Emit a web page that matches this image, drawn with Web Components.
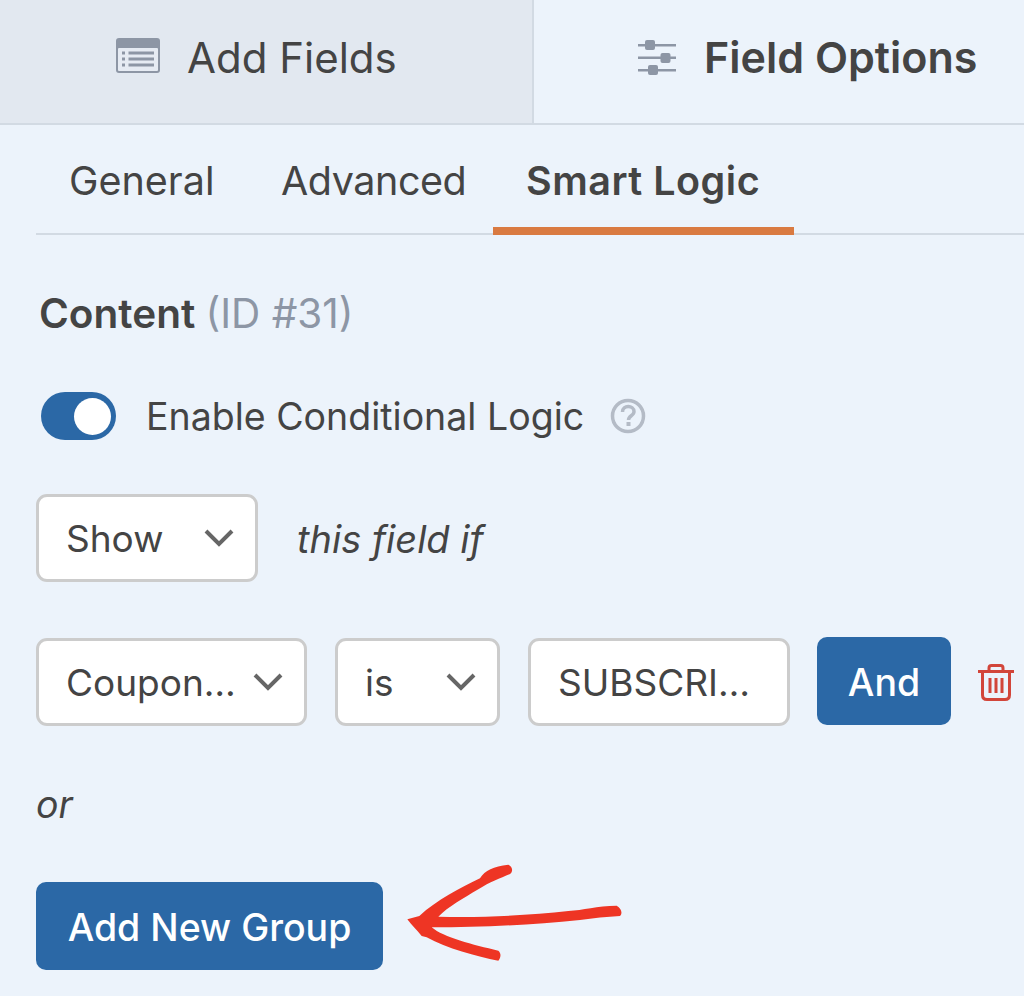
<!DOCTYPE html>
<html>
<head>
<meta charset="utf-8">
<title>Smart Logic</title>
<style>
  html, body { margin: 0; background: #ecf3fb; }
  body { font-family: Inter, "Liberation Sans", sans-serif; color: #444; width: 1024px; height: 996px; overflow: hidden; }
</style>
</head>
<body>
<top-tabs></top-tabs>
<sub-tabs></sub-tabs>
<logic-panel></logic-panel>

<script>
class TopTabs extends HTMLElement {
  constructor() {
    super();
    this.attachShadow({ mode: "open" });
    this.shadowRoot.innerHTML = /*html*/`
      <style>
        :host { display: flex; height: 125px; box-sizing: border-box; border-bottom: 2px solid #d2dae3; }
        .tab { display: flex; align-items: center; font-size: 42px; padding-bottom: 9px; box-sizing: border-box; }
        .add { width: 534px; background: #e2e8f0; border-right: 2px solid #d2dae3; padding-left: 116px; gap: 27px; }
        .opt { flex: 1; padding-left: 104px; gap: 28px; font-weight: 600; font-size: 43px; }
        .add svg { margin-bottom: 4px; }
        .opt svg { margin-top: 1px; }
        svg { display: block; flex: none; }
      </style>
      <div class="tab add">
        <svg width="44" height="35" viewBox="0 0 44 35">
          <rect x="0" y="0" width="44" height="35" rx="3" fill="#8d96a5"/>
          <rect x="2" y="10" width="40" height="23" rx="1" fill="#e6ebf3"/>
          <rect x="6" y="13.5" width="3" height="3" fill="#8d96a5"/>
          <rect x="6" y="19.5" width="3" height="3" fill="#8d96a5"/>
          <rect x="6" y="25.5" width="3" height="3" fill="#8d96a5"/>
          <rect x="12.5" y="13.5" width="25.5" height="3" fill="#8d96a5"/>
          <rect x="12.5" y="19.5" width="25.5" height="3" fill="#8d96a5"/>
          <rect x="12.5" y="25.5" width="25.5" height="3" fill="#8d96a5"/>
        </svg>
        <span>Add Fields</span>
      </div>
      <div class="tab opt">
        <svg width="38" height="36" viewBox="0 0 38 36" fill="#8d96a5">
          <rect x="0" y="4" width="38" height="2.5"/>
          <rect x="0" y="16.5" width="38" height="2.5"/>
          <rect x="0" y="29" width="38" height="2.5"/>
          <rect x="7" y="0" width="10" height="10" rx="2"/>
          <rect x="22.5" y="13" width="10" height="10" rx="2"/>
          <rect x="10" y="25" width="10" height="10" rx="2"/>
        </svg>
        <span>Field Options</span>
      </div>
    `;
  }
}
customElements.define("top-tabs", TopTabs);

class SubTabs extends HTMLElement {
  constructor() {
    super();
    this.attachShadow({ mode: "open" });
    this.shadowRoot.innerHTML = /*html*/`
      <style>
        :host { display: flex; margin-left: 36px; height: 110px; box-sizing: border-box; border-bottom: 2px solid #d2dae3; font-size: 39.5px; }
        div { padding: 33px 0 0 33px; box-sizing: border-box; height: 110px; line-height: 46px; white-space: nowrap; }
        .gen { width: 212px; }
        .adv { width: 245px; letter-spacing: -0.45px; }
        .on { width: 301px; font-weight: 600; letter-spacing: 0.5px; border-bottom: 8px solid #d97a41; }
      </style>
      <div class="gen">General</div>
      <div class="adv">Advanced</div>
      <div class="on">Smart Logic</div>
    `;
  }
}
customElements.define("sub-tabs", SubTabs);

class SelectBox extends HTMLElement {
  constructor() {
    super();
    this.attachShadow({ mode: "open" });
    this.shadowRoot.innerHTML = /*html*/`
      <style>
        :host { display: flex; align-items: center; justify-content: space-between; box-sizing: border-box; height: 88px; background: #fff; border: 3px solid #ccc; border-radius: 11px; padding: 0 21px 0 27px; font-size: 37px; white-space: nowrap; }
        svg { display: block; flex: none; }
      </style>
      <slot></slot>
      <svg width="30" height="18" viewBox="0 0 30 18" fill="none" stroke="#666" stroke-width="4"><path d="M2 2 L15 15 L28 2"/></svg>
    `;
  }
}
customElements.define("select-box", SelectBox);

class BlueButton extends HTMLElement {
  constructor() {
    super();
    this.attachShadow({ mode: "open" });
    this.shadowRoot.innerHTML = /*html*/`
      <style>
        :host { display: flex; align-items: center; justify-content: center; box-sizing: border-box; height: 88px; padding-top: 2px; background: #2b68a6; color: #fff; border-radius: 10px; font-size: 37.5px; font-weight: 500; white-space: nowrap; }
      </style>
      <slot></slot>
    `;
  }
}
customElements.define("blue-button", BlueButton);

class ToggleRow extends HTMLElement {
  constructor() {
    super();
    this.attachShadow({ mode: "open" });
    this.shadowRoot.innerHTML = /*html*/`
      <style>
        :host { display: flex; align-items: center; margin-left: 5px; font-size: 37.5px; height: 48px; }
        .sw { width: 75px; height: 48px; border-radius: 24px; background: #2b68a6; display: flex; justify-content: flex-end; align-items: center; padding-right: 5px; box-sizing: border-box; }
        .knob { width: 37px; height: 37px; border-radius: 50%; background: #fff; }
        .label { margin-left: 30px; white-space: nowrap; }
        svg { display: block; margin-left: 26px; }
      </style>
      <div class="sw"><div class="knob"></div></div>
      <span class="label"><slot></slot></span>
      <svg width="36" height="36" viewBox="0 0 36 36" fill="none">
        <circle cx="18" cy="18" r="15.5" stroke="#b4bbc6" stroke-width="3.5"/>
        <path d="M12.5 14 C12.5 6.5 24 7 24 13.5 C24 18 18.5 17.5 18.5 22" stroke="#b4bbc6" stroke-width="3.5"/>
        <rect x="16.5" y="24" width="4" height="4" fill="#b4bbc6"/>
      </svg>
    `;
  }
}
customElements.define("toggle-row", ToggleRow);

class LogicPanel extends HTMLElement {
  constructor() {
    super();
    this.attachShadow({ mode: "open" });
    this.shadowRoot.innerHTML = /*html*/`
      <style>
        :host { display: block; position: relative; padding: 54px 0 0 36px; font-size: 37.5px; }
        .title { margin: 0 0 0 3px; height: 50px; line-height: 50px; font-weight: 600; font-size: 40.5px; }
        .title span { font-weight: 400; color: #8d96a5; }
        toggle-row { margin-top: 53px; }
        .row { display: flex; align-items: center; }
        .show { margin-top: 54px; }
        .show select-box { width: 222px; }
        .show i { margin-left: 39px; font-size: 38px; padding-top: 2px; }
        .cond { margin-top: 56px; }
        .coupon { width: 271px; }
        .is { width: 165px; margin-left: 28px; }
        .val { width: 262px; margin-left: 28px; box-sizing: border-box; height: 88px; display: flex; align-items: center; background: #fff; border: 3px solid #ccc; border-radius: 11px; padding-left: 27px; white-space: nowrap; font-size: 37px; }
        .and { width: 134px; margin: -2px 0 0 27px; }
        .trash { display: block; margin-left: 27px; }
        .or { display: block; margin-top: 56px; height: 46px; line-height: 46px; }
        .group { width: 347px; margin-top: 54px; }
        .arrow { position: absolute; left: 380px; top: 615px; }
      </style>
      <div class="title">Content <span>(ID #31)</span></div>
      <toggle-row>Enable Conditional Logic</toggle-row>
      <div class="row show">
        <select-box>Show</select-box>
        <i>this field if</i>
      </div>
      <div class="row cond">
        <select-box class="coupon">Coupon…</select-box>
        <select-box class="is">is</select-box>
        <div class="val">SUBSCRI…</div>
        <blue-button class="and">And</blue-button>
        <svg class="trash" width="36" height="37" viewBox="0 0 36 37" fill="none" stroke="#d2453a" stroke-width="3">
          <path d="M0 7.5 H36"/>
          <path d="M11 7 V4 Q11 1.5 13.5 1.5 H22.5 Q25 1.5 25 4 V7"/>
          <path d="M4.5 8 V31 Q4.5 35.5 9 35.5 H27 Q31.5 35.5 31.5 31 V8"/>
          <path d="M12 14 V29 M18 14 V29 M24 14 V29"/>
        </svg>
      </div>
      <i class="or">or</i>
      <blue-button class="group">Add New Group</blue-button>
      <svg class="arrow" width="260" height="130" viewBox="0 0 780 390">
        <path fill="#ee3524" d="M82 208 L118 198 C170 150 240 115 300 85 C315 60 340 50 385 44 C398 50 400 65 390 72 C360 85 330 95 295 118 C250 145 205 170 175 200 C300 205 450 195 565 183 C610 180 650 168 710 167 C725 175 728 190 720 198 C680 200 640 205 600 210 C450 225 300 232 155 232 C190 262 280 285 355 302 C365 310 362 325 355 332 C290 320 200 295 140 262 L125 258 C110 240 95 225 82 208Z"/>
      </svg>
    `;
  }
}
customElements.define("logic-panel", LogicPanel);
</script>
</body>
</html>
